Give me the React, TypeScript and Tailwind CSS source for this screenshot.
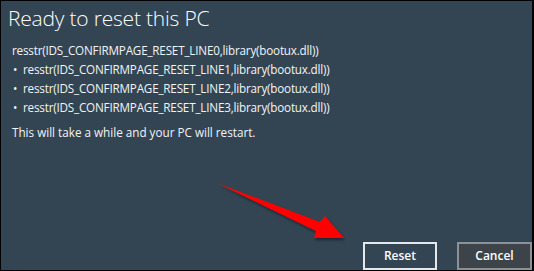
import React from "react";

const lines = [
  "resstr(IDS_CONFIRMPAGE_RESET_LINE1,library(bootux.dll))",
  "resstr(IDS_CONFIRMPAGE_RESET_LINE2,library(bootux.dll))",
  "resstr(IDS_CONFIRMPAGE_RESET_LINE3,library(bootux.dll))",
];

export default function App() {
  return (
    <div
      className="relative w-[534px] h-[271px] bg-black p-px pr-[2px] overflow-hidden"
      style={{ fontFamily: '"Open Sans", "Noto Sans", sans-serif' }}
    >
      <div className="flex h-full w-full flex-col bg-[#334553] text-white">
        <h1 className="pl-[7px] pt-[3px] text-[21px] font-light leading-[28px] tracking-[-0.2px]">
          Ready to reset this PC
        </h1>
        <div className="mt-[9px] pl-[11px] text-[11.7px] leading-[19px] tracking-[-0.2px] text-[#f2f4f5]">
          <p>resstr(IDS_CONFIRMPAGE_RESET_LINE0,library(bootux.dll))</p>
          <ul>
            {lines.map((l) => (
              <li key={l} className="flex">
                <span className="w-[11px] pl-[1px]">•</span>
                <span>{l}</span>
              </li>
            ))}
          </ul>
          <p className="mt-[6px] tracking-[0px]">This will take a while and your PC will restart.</p>
        </div>
        <div className="mt-auto flex justify-end gap-[20px] pb-0">
          <button className="h-[28px] w-[74px] border-2 border-[#e6e8ea] bg-[#334553] text-[12px] font-semibold text-white">
            Reset
          </button>
          <button className="h-[28px] w-[75px] border-2 border-[#8d9195] bg-[#3c4449] text-[12px] font-semibold text-white">
            Cancel
          </button>
        </div>
      </div>
      <svg
        className="absolute left-0 top-0"
        width="534"
        height="271"
        viewBox="0 0 534 271"
      >
        <defs>
          <filter id="sh" x="-10%" y="-10%" width="130%" height="140%">
            <feDropShadow dx="1" dy="2" stdDeviation="1.5" floodColor="#000" floodOpacity="0.45" />
          </filter>
        </defs>
        <polygon
          points="217,183 320,222 325,216 344,238 314,238 316,231"
          fill="#ff0000"
          filter="url(#sh)"
        />
      </svg>
    </div>
  );
}
